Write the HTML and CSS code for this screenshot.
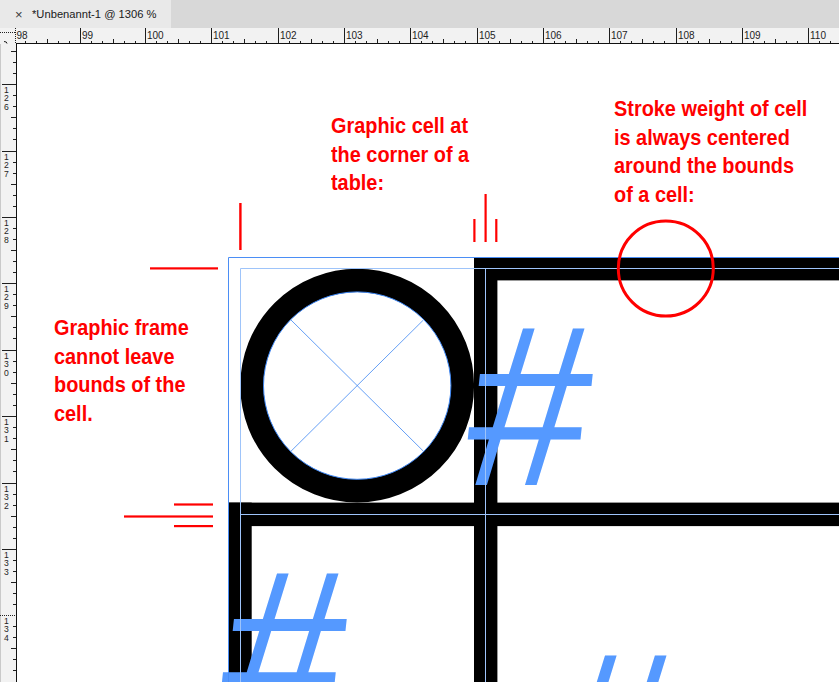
FILE: index.html
```html
<!DOCTYPE html>
<html lang="de">
<head>
<meta charset="utf-8">
<title>*Unbenannt-1 @ 1306 %</title>
<link rel="stylesheet" href="styles.css">
</head>
<body>
<div class="app">
  <header class="tabbar">
    <div class="tab"><span class="tab-close">×</span><span class="tab-title">*Unbenannt-1 @ 1306 %</span></div>
  </header>
  <div class="ruler-row">
    <div class="ruler-corner">
      <svg width="16" height="16" viewBox="0 28 16 16">
        <path class="dots" d="M0 32.5H15M15.5 28V44"/>
        <path class="tick" d="M4 41.5q3 0 3 2"/>
      </svg>
    </div>
    <div class="ruler-top">
      <svg width="823" height="16" viewBox="16 28 823 16">
        <path class="edge" d="M16 43.5H839"/>
        <path class="tick" d="M80.5 28V43M145.5 28V43M211.5 28V43M278.5 28V43M344.5 28V43M410.5 28V43M477.5 28V43M543.5 28V43M609.5 28V43M676.5 28V43M742.5 28V43M808.5 28V43"/>
        <path class="tick" d="M25.5 41V43M36.5 41V43M58.5 41V43M69.5 41V43M91.5 41V43M102.5 41V43M124.5 41V43M135.5 41V43M156.5 41V43M167.5 41V43M189.5 41V43M200.5 41V43M222.5 41V43M233.5 41V43M255.5 41V43M266.5 41V43M289.5 41V43M300.5 41V43M322.5 41V43M333.5 41V43M355.5 41V43M366.5 41V43M388.5 41V43M399.5 41V43M421.5 41V43M432.5 41V43M454.5 41V43M465.5 41V43M488.5 41V43M499.5 41V43M521.5 41V43M532.5 41V43M554.5 41V43M565.5 41V43M587.5 41V43M598.5 41V43M620.5 41V43M631.5 41V43M653.5 41V43M664.5 41V43M687.5 41V43M698.5 41V43M720.5 41V43M731.5 41V43M753.5 41V43M764.5 41V43M786.5 41V43M797.5 41V43M819.5 41V43M830.5 41V43"/>
        <path class="tick" d="M47.5 39V43M113.5 39V43M178.5 39V43M244.5 39V43M311.5 39V43M377.5 39V43M443.5 39V43M510.5 39V43M576.5 39V43M642.5 39V43M709.5 39V43M775.5 39V43"/>
        <g class="hlab">
          <text x="16.5" y="38.5">98</text>
          <text x="82" y="38.5">99</text>
          <text x="147" y="38.5">100</text>
          <text x="213" y="38.5">101</text>
          <text x="280" y="38.5">102</text>
          <text x="346" y="38.5">103</text>
          <text x="412" y="38.5">104</text>
          <text x="479" y="38.5">105</text>
          <text x="545" y="38.5">106</text>
          <text x="611" y="38.5">107</text>
          <text x="678" y="38.5">108</text>
          <text x="744" y="38.5">109</text>
          <text x="810" y="38.5">110</text>
        </g>
      </svg>
    </div>
  </div>
  <div class="work">
    <div class="ruler-left">
      <svg width="17" height="638" viewBox="0 44 17 638">
        <path class="side" d="M0.5 44V682"/>
        <path class="edge" d="M16.5 44V682"/>
        <path class="tick" d="M2 84.5H16M2 151.5H16M2 217.5H16M2 283.5H16M2 350.5H16M2 416.5H16M2 483.5H16M2 549.5H16"/>
        <path class="dots" d="M0 615.5H16"/>
        <path class="tick" d="M13 62.5H16M13 73.5H16M13 95.5H16M13 106.5H16M13 128.5H16M13 139.5H16M13 162.5H16M13 173.5H16M13 195.5H16M13 206.5H16M13 228.5H16M13 239.5H16M13 261.5H16M13 272.5H16M13 294.5H16M13 305.5H16M13 327.5H16M13 338.5H16M13 361.5H16M13 372.5H16M13 394.5H16M13 405.5H16M13 427.5H16M13 438.5H16M13 460.5H16M13 471.5H16M13 494.5H16M13 505.5H16M13 527.5H16M13 538.5H16M13 560.5H16M13 571.5H16M13 593.5H16M13 604.5H16M13 626.5H16M13 637.5H16M13 659.5H16M13 670.5H16"/>
        <path class="tick" d="M11 51.5H16M11 117.5H16M11 184.5H16M11 250.5H16M11 316.5H16M11 383.5H16M11 449.5H16M11 516.5H16M11 582.5H16M11 648.5H16"/>
        <g class="vlab">
          <text x="6.5" y="85">126</text>
          <text x="6.5" y="152">127</text>
          <text x="6.5" y="218">128</text>
          <text x="6.5" y="284">129</text>
          <text x="6.5" y="351">130</text>
          <text x="6.5" y="417">131</text>
          <text x="6.5" y="484">132</text>
          <text x="6.5" y="550">133</text>
          <text x="6.5" y="616">134</text>
        </g>
      </svg>
    </div>
    <main class="canvas">
      <svg class="art" width="822" height="638" viewBox="17 44 822 638">
        <g class="table-strokes">
          <rect x="474" y="258" width="365" height="22.4"/>
          <rect x="474" y="258" width="23.4" height="424"/>
          <rect x="228.6" y="502.6" width="610.4" height="23.5"/>
          <rect x="229" y="502.6" width="22.7" height="180"/>
        </g>
        <circle class="ring" cx="357.2" cy="385.6" r="105.3"/>
        <circle class="frame-path" cx="357.2" cy="385.6" r="93.7"/>
        <path class="frame-x" d="M290.9 319.9L423.5 451.3M423.5 319.9L290.9 451.3"/>
        <text class="hash" transform="translate(462 485) skewX(-6) scale(1 1.06)">#</text>
        <text class="hash" transform="translate(216 730) skewX(-6) scale(1 1.06)">#</text>
        <text class="hash" transform="translate(544 811.7) skewX(-6) scale(1 1.06)">#</text>
        <path class="sel-outer" d="M228.5 257.5H839M228.5 257.5V682"/>
        <path class="sel-inner" d="M240.5 268.5H839M240.5 268.5V682M485.5 268.5V682M240.5 514.5H839"/>
        <g class="marks">
          <rect x="239.2" y="203" width="2.4" height="47"/>
          <rect x="150" y="267.3" width="68" height="2.2"/>
          <rect x="473.3" y="219" width="2.2" height="23"/>
          <rect x="484.5" y="194" width="2.2" height="48"/>
          <rect x="495.2" y="219" width="2.2" height="23"/>
          <rect x="174" y="503.4" width="39" height="2.2"/>
          <rect x="124" y="515.4" width="89" height="2.2"/>
          <rect x="174" y="525" width="39" height="2.2"/>
        </g>
        <circle class="callout" cx="665.8" cy="268.5" r="47.5"/>
      </svg>
      <p class="note note-corner">Graphic cell at<br>the corner of a<br>table:</p>
      <p class="note note-stroke">Stroke weight of cell<br>is always centered<br>around the bounds<br>of a cell:</p>
      <p class="note note-frame">Graphic frame<br>cannot leave<br>bounds of the<br>cell.</p>
    </main>
  </div>
</div>
</body>
</html>
```

FILE: styles.css
```css
html, body {
  margin: 0;
  padding: 0;
}
body {
  width: 839px;
  height: 682px;
  overflow: hidden;
  background: #ffffff;
  font-family: "Liberation Sans", Arial, sans-serif;
}
.app {
  display: flex;
  flex-direction: column;
  width: 839px;
  height: 682px;
}
.tabbar {
  flex: none;
  height: 28px;
  display: flex;
  background: #d8d8d8;
}
.tab {
  width: 171px;
  box-sizing: border-box;
  padding-left: 15px;
  display: flex;
  align-items: center;
  background: #e9e9e9;
}
.tab-close {
  width: 17px;
  font-size: 13px;
  color: #3a3a3a;
}
.tab-title {
  font-size: 11.2px;
  color: #1a1a1a;
  white-space: nowrap;
}
.ruler-row {
  flex: none;
  height: 16px;
  display: flex;
  background: #f2f2f2;
}
.ruler-corner {
  flex: none;
  width: 16px;
}
.ruler-top {
  flex: 1;
  overflow: hidden;
}
.ruler-row svg, .ruler-left svg {
  display: block;
}
.work {
  flex: 1;
  min-height: 0;
  display: flex;
}
.ruler-left {
  flex: none;
  width: 17px;
  background: #f2f2f2;
  overflow: hidden;
}
.canvas {
  flex: 1;
  position: relative;
  overflow: hidden;
  background: #ffffff;
}
.art {
  position: absolute;
  left: 0;
  top: 0;
  display: block;
}

.tick { stroke: #1e1e1e; stroke-width: 1; fill: none; }
.edge { stroke: #111111; stroke-width: 1; fill: none; }
.side { stroke: #c9c9c9; stroke-width: 1; fill: none; }
.dots { stroke: #222222; stroke-width: 1; stroke-dasharray: 1 1; fill: none; }
.hlab text {
  font-family: "Liberation Sans", Arial, sans-serif;
  font-size: 10px;
  fill: #1e1e1e;
}
.vlab text {
  font-family: "Liberation Sans", Arial, sans-serif;
  font-size: 8.6px;
  letter-spacing: -1.6px;
  writing-mode: vertical-lr;
  text-orientation: upright;
  fill: #1e1e1e;
}

.table-strokes rect { fill: #000000; }
.ring { fill: none; stroke: #000000; stroke-width: 23.2; }
.frame-path { fill: none; stroke: #3d86f3; stroke-width: 1; }
.frame-x { fill: none; stroke: #3d86f3; stroke-width: 0.8; }
.hash {
  font-family: "Liberation Sans", Arial, sans-serif;
  font-size: 216px;
  fill: #5599ff;
}
.sel-outer { fill: none; stroke: #4b8ef5; stroke-width: 1; }
.sel-inner { fill: none; stroke: #9ec4fa; stroke-width: 1; }
.marks rect { fill: #ff0000; }
.callout { fill: none; stroke: #ff0000; stroke-width: 3; }

.note {
  position: absolute;
  margin: 0;
  font-family: "Liberation Sans", Arial, sans-serif;
  font-weight: bold;
  font-size: 21.5px;
  line-height: 28.6px;
  color: #ff0000;
  white-space: nowrap;
  transform: scaleX(0.925);
  transform-origin: 0 0;
}
.note-corner { left: 314px; top: 68px; }
.note-stroke { left: 597px; top: 51px; }
.note-frame { left: 37px; top: 270px; }
```
